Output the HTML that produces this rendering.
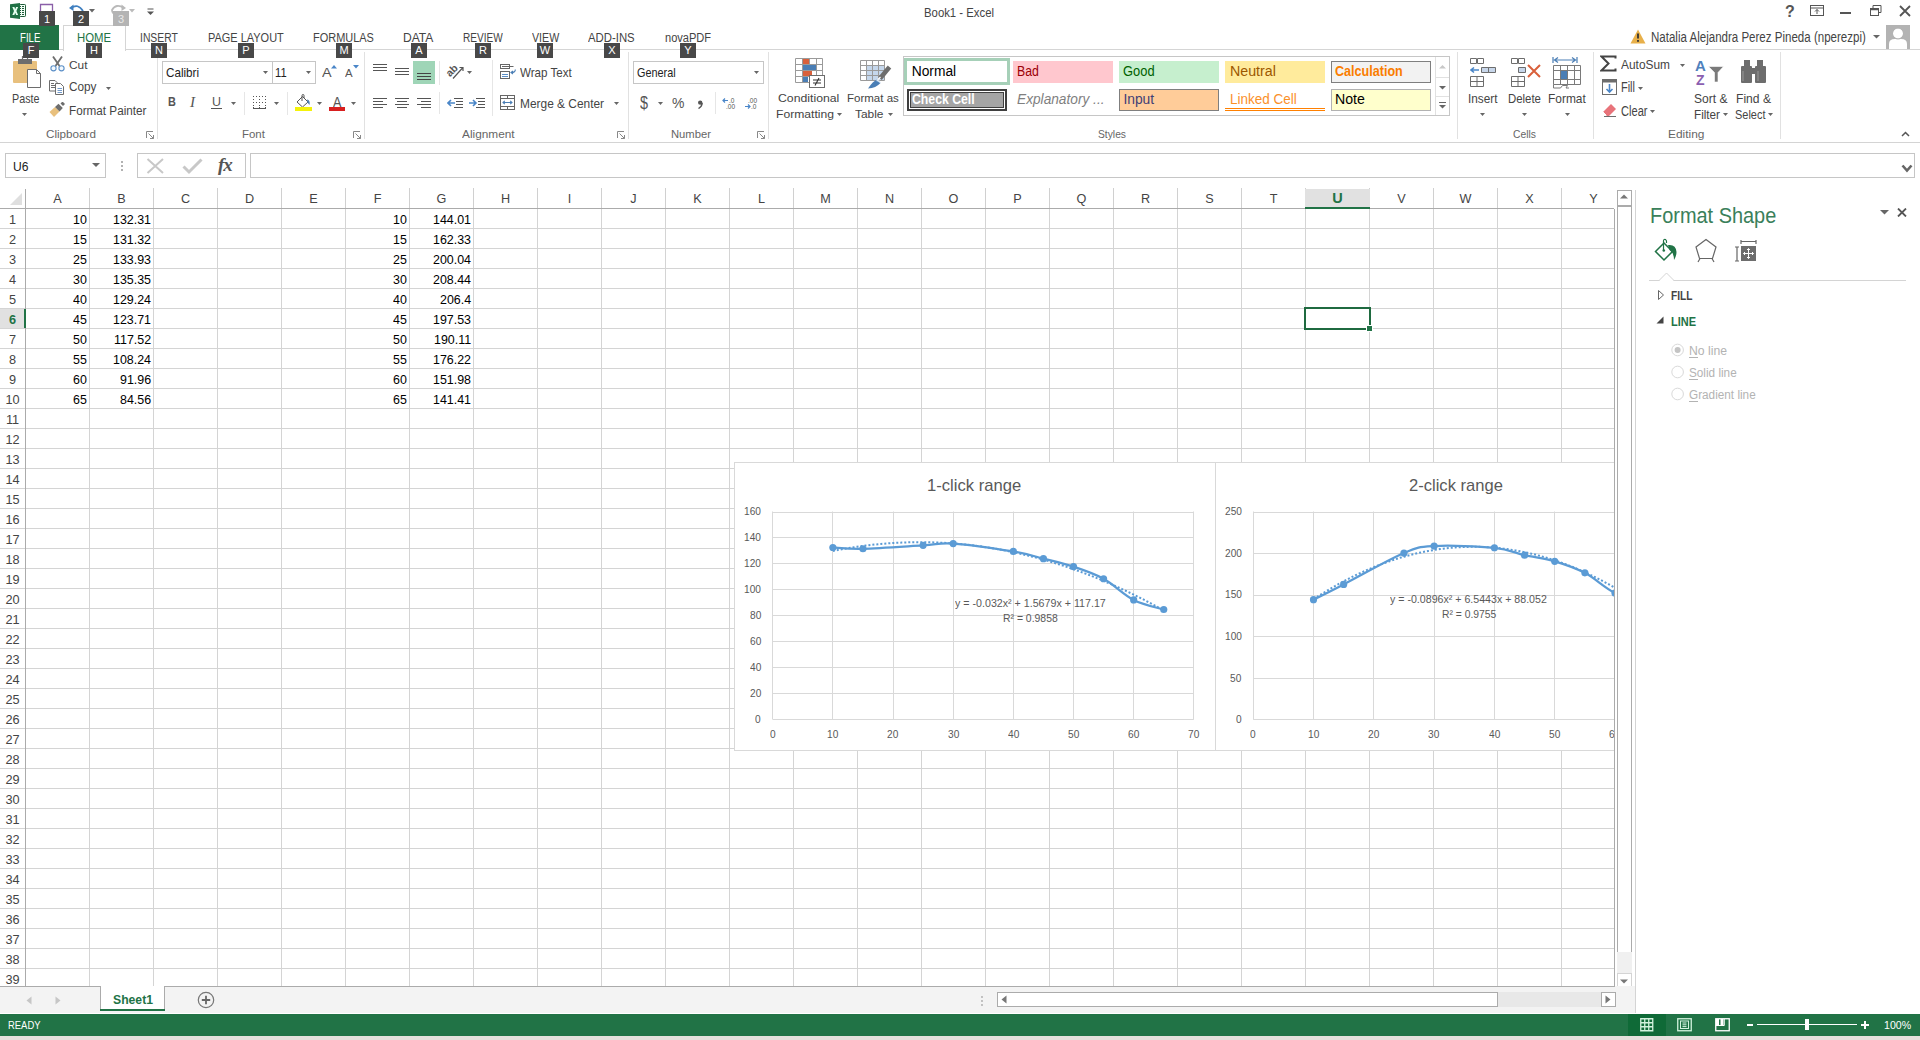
<!DOCTYPE html>
<html><head><meta charset="utf-8"><title>Book1 - Excel</title>
<style>
html,body{margin:0;padding:0;}
body{width:1920px;height:1040px;position:relative;overflow:hidden;background:#fff;font-family:"Liberation Sans",sans-serif;color:#444;}
.a{position:absolute;}
.t{position:absolute;white-space:nowrap;line-height:1;}
.kt{position:absolute;z-index:10;background:#484848;color:#fff;font-size:11px;line-height:15px;text-align:center;width:16px;height:15px;}

</style></head><body>
<!-- 01_title.py -->
<svg class="a" style="left:0px;top:0px" width="30" height="22">
  <rect x="19.5" y="4.5" width="6" height="12" rx="0.8" fill="#f4fff8" stroke="#1e5b38" stroke-width="1"/>
  <path d="M20 6.5h1M22 6.5h2M20 8.5h1M22 8.5h2M20 10.5h1M22 10.5h2M20 12.5h1M22 12.5h2M20 14.5h1M22 14.5h2" stroke="#1e5b38" stroke-width="1"/>
  <path d="M10 4.2 L20 3 V19 L10 17.8 Z" fill="#1f7145"/>
  <path d="M12.3 7 H14.4 L15.2 9.3 L16.1 7 H18.1 L16.4 11 L18.1 15 H16.1 L15.2 12.7 L14.4 15 H12.3 L14 11 Z" fill="#e6fff0"/>
</svg>
<svg class="a" style="left:39px;top:3px" width="16" height="10"><path d="M1.5 10V1.5h12V10" fill="none" stroke="#8a5fa8" stroke-width="1.3"/></svg>
<div class="kt" style="left:39px;top:11px;height:15px;line-height:16px;">1</div>
<svg class="a" style="left:68px;top:3px" width="20" height="10"><path d="M3 5 Q10 0 15 8" fill="none" stroke="#3f7fc0" stroke-width="1.8"/><path d="M1 5 L5.5 1.5 L5.5 8 Z" fill="#3f7fc0"/></svg>
<div class="kt" style="left:73px;top:11px;height:15px;line-height:16px;">2</div>
<svg class="a" style="left:89px;top:9px" width="6" height="4"><path d="M0 0h6L3 3.5z" fill="#666"/></svg>
<svg class="a" style="left:108px;top:3px" width="20" height="13"><path d="M16 5 Q8 0 4 7 Q4 11 9 12" fill="none" stroke="#b9b9b9" stroke-width="1.8"/><path d="M18 5 L13.5 1.5 L13.5 8 Z" fill="#b9b9b9"/></svg>
<div class="kt" style="left:113px;top:11px;height:15px;line-height:16px;background:#b4b4b4;color:#e8e8e8;">3</div>
<svg class="a" style="left:129px;top:9px" width="6" height="4"><path d="M0 0h6L3 3.5z" fill="#bbb"/></svg>
<svg class="a" style="left:147px;top:8px" width="7" height="8"><path d="M0.5 1h6" stroke="#555" stroke-width="1"/><path d="M0 3.5h7L3.5 7z" fill="#555"/></svg>
<svg class="a" style="left:1810px;top:5px" width="15" height="12"><rect x="0.5" y="0.5" width="13" height="10" fill="none" stroke="#555"/><path d="M0.5 3h13" stroke="#555"/><path d="M7 9V4.5M5 6.5l2-2 2 2" fill="none" stroke="#555"/></svg>
<div class="a" style="left:1840px;top:12px;width:11px;height:2px;background:#555;"></div>
<svg class="a" style="left:1870px;top:5px" width="12" height="12"><rect x="0.5" y="3.5" width="8" height="7" fill="none" stroke="#555"/><path d="M3 3.5V0.5h8v7H8.5" fill="none" stroke="#555"/><path d="M0.5 4.5h8" stroke="#555" stroke-width="1.5"/></svg>
<svg class="a" style="left:1899px;top:5px" width="12" height="12"><path d="M1 1L11 11M11 1L1 11" stroke="#555" stroke-width="1.8"/></svg>

<div class="t" style="left:924.00px;top:6.00px;font-size:13.08px;color:#444;transform:scaleX(0.8674);transform-origin:0 0;">Book1 - Excel</div>
<div class="t" style="left:1785.00px;top:4.00px;font-size:15.99px;color:#555;font-weight:bold;">?</div>
<div class="a" style="left:0;top:49px;width:1920px;height:1px;background:#d5d5d5;"></div>
<div class="a" style="left:0;top:25px;width:59px;height:25px;background:#217346;"></div>
<div class="a" style="left:63px;top:25px;width:61px;height:25px;background:#fff;border:1px solid #d5d5d5;border-bottom:none;"></div>
<div class="t" style="left:19.60px;top:32.00px;font-size:12.65px;color:#fff;transform:scaleX(0.7639);transform-origin:0 0;">FILE</div>
<div class="t" style="left:76.70px;top:32.00px;font-size:12.65px;color:#217346;transform:scaleX(0.8989);transform-origin:0 0;">HOME</div>
<div class="t" style="left:139.70px;top:32.00px;font-size:12.65px;color:#444;transform:scaleX(0.8192);transform-origin:0 0;">INSERT</div>
<div class="t" style="left:207.50px;top:32.00px;font-size:12.65px;color:#444;transform:scaleX(0.8676);transform-origin:0 0;">PAGE LAYOUT</div>
<div class="t" style="left:313.30px;top:32.00px;font-size:12.65px;color:#444;transform:scaleX(0.8668);transform-origin:0 0;">FORMULAS</div>
<div class="t" style="left:403.30px;top:32.00px;font-size:12.65px;color:#444;transform:scaleX(0.9545);transform-origin:0 0;">DATA</div>
<div class="t" style="left:463.30px;top:32.00px;font-size:12.65px;color:#444;transform:scaleX(0.7958);transform-origin:0 0;">REVIEW</div>
<div class="t" style="left:532.00px;top:32.00px;font-size:12.65px;color:#444;transform:scaleX(0.8417);transform-origin:0 0;">VIEW</div>
<div class="t" style="left:588.30px;top:32.00px;font-size:12.65px;color:#444;transform:scaleX(0.8983);transform-origin:0 0;">ADD-INS</div>
<div class="t" style="left:664.70px;top:32.00px;font-size:12.65px;color:#444;transform:scaleX(0.8746);transform-origin:0 0;">novaPDF</div>
<div class="kt" style="left:23px;top:43px;">F</div>
<div class="kt" style="left:86px;top:43px;">H</div>
<div class="kt" style="left:151px;top:43px;">N</div>
<div class="kt" style="left:238px;top:43px;">P</div>
<div class="kt" style="left:336px;top:43px;">M</div>
<div class="kt" style="left:411px;top:43px;">A</div>
<div class="kt" style="left:475px;top:43px;">R</div>
<div class="kt" style="left:537px;top:43px;">W</div>
<div class="kt" style="left:604px;top:43px;">X</div>
<div class="kt" style="left:680px;top:43px;">Y</div>
<svg class="a" style="left:1630px;top:29px" width="16" height="15"><path d="M8 0.5L15.5 14.5H0.5Z" fill="#e8b04a"/><path d="M8 4.5v5" stroke="#333" stroke-width="1.8"/><rect x="7.1" y="11" width="1.8" height="1.8" fill="#333"/></svg>
<svg class="a" style="left:1873px;top:35px" width="7" height="4"><path d="M0 0h7L3.5 3.5z" fill="#666"/></svg>
<div class="a" style="left:1886px;top:25px;width:24px;height:24px;background:#b3b3b3;overflow:hidden;">
<svg width="24" height="24"><circle cx="12" cy="8.5" r="5" fill="#fff"/><path d="M3 24 V19 Q3 14 9 14 H15 Q21 14 21 19 V24Z" fill="#fff"/><circle cx="12" cy="8.5" r="5.6" fill="none" stroke="#b3b3b3" stroke-width="0.8"/></svg></div>
<div class="t" style="left:1651.00px;top:31.00px;font-size:13.81px;color:#444;transform:scaleX(0.8361);transform-origin:0 0;">Natalia Alejandra Perez Pineda (nperezpi)</div>
<!-- 02_ribbon.py -->
<div class="a" style="left:0;top:142px;width:1920px;height:1px;background:#d4d4d4;"></div>
<svg class="a" style="left:12px;top:56px" width="32" height="34">
<rect x="1" y="5" width="24" height="22" rx="1" fill="#e8c07d"/>
<rect x="6" y="3" width="14" height="5" fill="#6d6d6d"/><rect x="10.5" y="0.5" width="5" height="4" fill="none" stroke="#6d6d6d" stroke-width="1.2"/>
<path d="M15.5 13.5h9l4 4v14h-13z" fill="#fff" stroke="#6d6d6d" stroke-width="1"/><path d="M24.5 13.5v4h4" fill="none" stroke="#6d6d6d"/>
</svg>
<div class="t" style="left:11.50px;top:94.00px;font-size:11.92px;color:#444;transform:scaleX(0.9023);transform-origin:0 0;">Paste</div>
<svg class="a" style="left:22.0px;top:113px" width="5" height="3"><path d="M0 0h5L2.5 3z" fill="#666"/></svg>
<svg class="a" style="left:49px;top:56px" width="17" height="16"><path d="M4 0.5L10.5 10M13 0.5L6.5 10" stroke="#6d6d6d" stroke-width="1.8"/><circle cx="4.5" cy="12.3" r="2.6" fill="#f4f9fd" stroke="#5b8fc7" stroke-width="1.1"/><circle cx="12.5" cy="12.3" r="2.6" fill="#f4f9fd" stroke="#5b8fc7" stroke-width="1.1"/></svg>
<div class="t" style="left:68.50px;top:60.00px;font-size:11.05px;color:#444;transform:scaleX(1.0762);transform-origin:0 0;">Cut</div>
<svg class="a" style="left:49px;top:80px" width="16" height="15"><path d="M0.5 0.5h5.5l2 2v8.5h-7.5z" fill="#fff" stroke="#6d6d6d"/><path d="M2 3.5h3M2 5.5h4M2 7.5h4" stroke="#6d6d6d"/><path d="M6.5 3.5h5l3 3v8h-8z" fill="#fff" stroke="#6d6d6d"/><path d="M8.5 8.5h4.5M8.5 10.5h4.5M8.5 12.5h4.5" stroke="#4f81bd" stroke-opacity="0.8"/></svg>
<div class="t" style="left:68.50px;top:82.00px;font-size:11.92px;color:#444;transform:scaleX(0.9884);transform-origin:0 0;">Copy</div>
<svg class="a" style="left:106.0px;top:86.5px" width="5" height="3"><path d="M0 0h5L2.5 3z" fill="#666"/></svg>
<svg class="a" style="left:49px;top:102px" width="18" height="16"><path d="M0.5 10 L6 5 L10.5 9.5 L5 15 Z" fill="#e8c07d"/><path d="M6 5 L9.5 1.8 L13.8 6 L10.5 9.5 Z" fill="#6d6d6d"/><path d="M11.5 1.5 L13.5 -0.5 L16 2 L14 4Z" fill="#6d6d6d"/></svg>
<div class="t" style="left:68.50px;top:105.00px;font-size:12.65px;color:#444;transform:scaleX(0.9267);transform-origin:0 0;">Format Painter</div>
<div class="t" style="left:45.50px;top:129.00px;font-size:10.76px;color:#666;transform:scaleX(1.0861);transform-origin:0 0;">Clipboard</div>
<svg class="a" style="left:146px;top:131px" width="8" height="8"><path d="M0.5 7V0.5H7" fill="none" stroke="#888"/><path d="M2.5 2.5L7.5 7.5M7.5 4v3.5H4" fill="none" stroke="#888"/></svg>
<div class="a" style="left:157px;top:52px;width:1px;height:87px;background:#e1e1e1;"></div>
<div class="a" style="left:162px;top:61px;width:109px;height:21px;border:1px solid #c6c6c6;background:#fff;"></div>
<div class="a" style="left:272px;top:61px;width:42px;height:21px;border:1px solid #c6c6c6;background:#fff;"></div>
<div class="t" style="left:165.60px;top:67.00px;font-size:12.35px;color:#222;transform:scaleX(0.9454);transform-origin:0 0;">Calibri</div>
<svg class="a" style="left:262.8px;top:71px" width="5" height="3"><path d="M0 0h5L2.5 3z" fill="#666"/></svg>
<div class="t" style="left:275.40px;top:67.00px;font-size:12.35px;color:#222;transform:scaleX(0.9045);transform-origin:0 0;">11</div>
<svg class="a" style="left:305.5px;top:71px" width="5" height="3"><path d="M0 0h5L2.5 3z" fill="#666"/></svg>
<div class="t" style="left:322.40px;top:66.00px;font-size:13.66px;color:#555;transform:scaleX(1.0534);transform-origin:0 0;">A</div>
<svg class="a" style="left:331px;top:65px" width="6" height="4"><path d="M0 3.5h6L3 0z" fill="#4a86c8"/></svg>
<div class="t" style="left:345.40px;top:69.00px;font-size:10.03px;color:#555;transform:scaleX(1.1361);transform-origin:0 0;">A</div>
<svg class="a" style="left:353px;top:65px" width="6" height="4"><path d="M0 0h6L3 3.5z" fill="#4a86c8"/></svg>
<div class="t" style="left:168.40px;top:96.00px;font-size:12.06px;color:#555;font-weight:bold;transform:scaleX(0.9068);transform-origin:0 0;">B</div>
<div class="t" style="left:190px;top:95px;font-family:'Liberation Serif',serif;font-style:italic;font-size:15px;color:#555;">I</div>
<div class="t" style="left:212.00px;top:96.00px;font-size:12.06px;color:#555;transform:scaleX(1.0330);transform-origin:0 0;">U</div>
<div class="a" style="left:211px;top:108px;width:11px;height:1px;background:#555;"></div>
<svg class="a" style="left:230.9px;top:102px" width="5" height="3"><path d="M0 0h5L2.5 3z" fill="#666"/></svg>
<div class="a" style="left:244px;top:92px;width:1px;height:23px;background:#e6e6e6;"></div>
<svg class="a" style="left:253px;top:96px" width="14" height="14"><g fill="#555"><rect x="0" y="0" width="1" height="1"/><rect x="3" y="0" width="1" height="1"/><rect x="6" y="0" width="1" height="1"/><rect x="9" y="0" width="1" height="1"/><rect x="12" y="0" width="1" height="1"/><rect x="0" y="3" width="1" height="1"/><rect x="6" y="3" width="1" height="1"/><rect x="12" y="3" width="1" height="1"/><rect x="0" y="6" width="1" height="1"/><rect x="3" y="6" width="1" height="1"/><rect x="6" y="6" width="1" height="1"/><rect x="9" y="6" width="1" height="1"/><rect x="12" y="6" width="1" height="1"/><rect x="0" y="9" width="1" height="1"/><rect x="6" y="9" width="1" height="1"/><rect x="12" y="9" width="1" height="1"/><rect x="0" y="11" width="1" height="1"/><rect x="6" y="11" width="1" height="1"/><rect x="12" y="11" width="1" height="1"/></g><path d="M0 12.5h13" stroke="#555" stroke-width="1"/></svg>
<svg class="a" style="left:274.0px;top:102px" width="5" height="3"><path d="M0 0h5L2.5 3z" fill="#666"/></svg>
<div class="a" style="left:287px;top:92px;width:1px;height:23px;background:#e6e6e6;"></div>
<svg class="a" style="left:294px;top:94px" width="18" height="18"><path d="M3 8 L8.5 2.5 L14 8 L8.5 13 Z" fill="#fff" stroke="#555" stroke-width="1"/><path d="M8 7V1.5Q8 0.5 9 0.5Q10 0.5 10 1.5V4" fill="none" stroke="#555" stroke-width="1"/><path d="M13 5.5 Q16.5 6 15.5 11 Q14 9 13.5 8.5Z" fill="#4a7eb5"/><rect x="1" y="13" width="17" height="4" fill="#f4f20a"/></svg>
<svg class="a" style="left:317.1px;top:102px" width="5" height="3"><path d="M0 0h5L2.5 3z" fill="#666"/></svg>
<div class="t" style="left:333.00px;top:95.00px;font-size:14.53px;color:#555;transform:scaleX(0.8664);transform-origin:0 0;">A</div>
<div class="a" style="left:329px;top:107px;width:16px;height:4px;background:#d81f1f;"></div>
<svg class="a" style="left:351.3px;top:102px" width="5" height="3"><path d="M0 0h5L2.5 3z" fill="#666"/></svg>
<div class="t" style="left:241.80px;top:129.00px;font-size:10.76px;color:#666;transform:scaleX(1.0640);transform-origin:0 0;">Font</div>
<svg class="a" style="left:353px;top:131px" width="8" height="8"><path d="M0.5 7V0.5H7" fill="none" stroke="#888"/><path d="M2.5 2.5L7.5 7.5M7.5 4v3.5H4" fill="none" stroke="#888"/></svg>
<div class="a" style="left:364px;top:52px;width:1px;height:87px;background:#e1e1e1;"></div>
<div class="a" style="left:373px;top:64px;width:14px;height:1px;background:#555;"></div>
<div class="a" style="left:373px;top:67px;width:14px;height:1px;background:#555;"></div>
<div class="a" style="left:373px;top:70px;width:14px;height:1px;background:#555;"></div>
<div class="a" style="left:395px;top:68px;width:14px;height:1px;background:#555;"></div>
<div class="a" style="left:395px;top:71px;width:14px;height:1px;background:#555;"></div>
<div class="a" style="left:395px;top:74px;width:14px;height:1px;background:#555;"></div>
<div class="a" style="left:413px;top:61px;width:22px;height:23px;background:#9fd5b7;"></div>
<div class="a" style="left:417px;top:73px;width:14px;height:1px;background:#444;"></div>
<div class="a" style="left:417px;top:76px;width:14px;height:1px;background:#444;"></div>
<div class="a" style="left:417px;top:79px;width:14px;height:1px;background:#444;"></div>
<div class="a" style="left:439px;top:61px;width:1px;height:24px;background:#e6e6e6;"></div>
<svg class="a" style="left:446px;top:63px" width="18" height="16"><text x="0" y="11" font-family="Liberation Sans" font-size="10.5" font-weight="bold" fill="#555" transform="rotate(-45 6 8)">ab</text><path d="M7 15.5 L16.5 5 M13.5 4.5h3.5v3.5" fill="none" stroke="#555" stroke-width="1.2"/></svg>
<svg class="a" style="left:467.0px;top:71px" width="5" height="3"><path d="M0 0h5L2.5 3z" fill="#666"/></svg>
<div class="a" style="left:492px;top:60px;width:1px;height:56px;background:#e6e6e6;"></div>
<svg class="a" style="left:499px;top:63px" width="18" height="17"><rect x="1.5" y="1.5" width="9" height="4" fill="#fff" stroke="#666"/><path d="M3 3.5h11.5" stroke="#666"/><rect x="1.5" y="8.5" width="9" height="7" fill="#fff" stroke="#666"/><path d="M3 11.5h6M3 13.5h6" stroke="#5b8fc7"/><path d="M16.3 6.5 Q16.5 9.5 12.5 9.5 M14 8 L12 9.5 L14 11" fill="none" stroke="#4a7eb5" stroke-width="1.1"/></svg>
<div class="t" style="left:519.70px;top:67.00px;font-size:12.79px;color:#444;transform:scaleX(0.9070);transform-origin:0 0;">Wrap Text</div>
<div class="a" style="left:373px;top:98px;width:14px;height:1px;background:#555;"></div>
<div class="a" style="left:373px;top:101px;width:10px;height:1px;background:#555;"></div>
<div class="a" style="left:373px;top:104px;width:14px;height:1px;background:#555;"></div>
<div class="a" style="left:373px;top:107px;width:10px;height:1px;background:#555;"></div>
<div class="a" style="left:395px;top:98px;width:14px;height:1px;background:#555;"></div>
<div class="a" style="left:397px;top:101px;width:10px;height:1px;background:#555;"></div>
<div class="a" style="left:395px;top:104px;width:14px;height:1px;background:#555;"></div>
<div class="a" style="left:397px;top:107px;width:10px;height:1px;background:#555;"></div>
<div class="a" style="left:417px;top:98px;width:14px;height:1px;background:#555;"></div>
<div class="a" style="left:421px;top:101px;width:10px;height:1px;background:#555;"></div>
<div class="a" style="left:417px;top:104px;width:14px;height:1px;background:#555;"></div>
<div class="a" style="left:421px;top:107px;width:10px;height:1px;background:#555;"></div>
<div class="a" style="left:439px;top:92px;width:1px;height:22px;background:#e6e6e6;"></div>
<svg class="a" style="left:447px;top:97px" width="17" height="12"><path d="M7 1.5h9M9 4.5h7M9 7.5h7M7 10.5h9" stroke="#555"/><path d="M1 6h7M4 3L1 6l3 3" fill="none" stroke="#4a86c8" stroke-width="1.6"/></svg>
<svg class="a" style="left:469px;top:97px" width="17" height="12"><path d="M7 1.5h9M9 4.5h7M9 7.5h7M7 10.5h9" stroke="#555"/><path d="M0 6h7M4 3l3 3-3 3" fill="none" stroke="#4a86c8" stroke-width="1.6"/></svg>
<svg class="a" style="left:500px;top:95px" width="16" height="16"><rect x="0.5" y="0.5" width="14" height="14" fill="#fff" stroke="#666"/><path d="M0.5 3.5h14M0.5 11.5h14M7.5 0.5v3M7.5 11.5v3" stroke="#666"/><path d="M3 7.5h9M4.8 5.8l-1.8 1.7 1.8 1.7M10.2 5.8l1.8 1.7-1.8 1.7" fill="none" stroke="#4a7eb5" stroke-width="1.1"/></svg>
<div class="t" style="left:519.70px;top:97.00px;font-size:13.66px;color:#444;transform:scaleX(0.8720);transform-origin:0 0;">Merge &amp; Center</div>
<svg class="a" style="left:614.2px;top:102px" width="5" height="3"><path d="M0 0h5L2.5 3z" fill="#666"/></svg>
<div class="t" style="left:462.00px;top:129.00px;font-size:10.76px;color:#666;transform:scaleX(1.0997);transform-origin:0 0;">Alignment</div>
<svg class="a" style="left:617px;top:131px" width="8" height="8"><path d="M0.5 7V0.5H7" fill="none" stroke="#888"/><path d="M2.5 2.5L7.5 7.5M7.5 4v3.5H4" fill="none" stroke="#888"/></svg>
<div class="a" style="left:628px;top:52px;width:1px;height:87px;background:#e1e1e1;"></div>
<div class="a" style="left:633px;top:61px;width:129px;height:21px;border:1px solid #c6c6c6;background:#fff;"></div>
<div class="t" style="left:636.70px;top:67.00px;font-size:12.79px;color:#222;transform:scaleX(0.8483);transform-origin:0 0;">General</div>
<svg class="a" style="left:753.5px;top:71px" width="5" height="3"><path d="M0 0h5L2.5 3z" fill="#666"/></svg>
<div class="t" style="left:640.30px;top:94.00px;font-size:18.90px;color:#555;transform:scaleX(0.7613);transform-origin:0 0;">$</div>
<svg class="a" style="left:657.5px;top:102px" width="5" height="3"><path d="M0 0h5L2.5 3z" fill="#666"/></svg>
<div class="t" style="left:672.40px;top:96.00px;font-size:14.97px;color:#555;transform:scaleX(0.9315);transform-origin:0 0;">%</div>
<svg class="a" style="left:697px;top:100px" width="6" height="9"><circle cx="3.2" cy="2.6" r="2.2" fill="#555"/><path d="M5.2 3 Q5 6.5 1.5 8.5" fill="none" stroke="#555" stroke-width="1.4"/></svg>
<div class="a" style="left:715px;top:92px;width:1px;height:22px;background:#e6e6e6;"></div>
<svg class="a" style="left:722px;top:97px" width="16" height="13"><path d="M1 3.5h5M3 1.5l-2 2 2 2" fill="none" stroke="#4a86c8" stroke-width="1.2"/><text x="7" y="6" font-family="Liberation Sans" font-size="6.5" fill="#555">.0</text><text x="4" y="12" font-family="Liberation Sans" font-size="6.5" fill="#555">.00</text></svg>
<svg class="a" style="left:744px;top:97px" width="16" height="13"><text x="4" y="6" font-family="Liberation Sans" font-size="6.5" fill="#555">.00</text><path d="M1 9.5h5M4 7.5l2 2-2 2" fill="none" stroke="#4a86c8" stroke-width="1.2"/><text x="7" y="12" font-family="Liberation Sans" font-size="6.5" fill="#555">.0</text></svg>
<div class="t" style="left:671.00px;top:129.00px;font-size:10.76px;color:#666;transform:scaleX(1.0456);transform-origin:0 0;">Number</div>
<svg class="a" style="left:757px;top:131px" width="8" height="8"><path d="M0.5 7V0.5H7" fill="none" stroke="#888"/><path d="M2.5 2.5L7.5 7.5M7.5 4v3.5H4" fill="none" stroke="#888"/></svg>
<div class="a" style="left:768px;top:52px;width:1px;height:87px;background:#e1e1e1;"></div>
<svg class="a" style="left:795px;top:58px" width="32" height="32">
<path d="M0.5 0.5h27v24h-27z M0.5 6.5h27 M0.5 12.5h27 M0.5 18.5h27 M7.5 0.5v24 M14.5 0.5v24 M21.5 0.5v24" fill="#fff" stroke="#9a9a9a"/>
<rect x="8" y="1" width="6" height="5" fill="#d9603b"/><rect x="8" y="7" width="13" height="5" fill="#4a7eb5"/><rect x="8" y="13" width="9" height="5" fill="#d9603b"/><rect x="8" y="19" width="5" height="5" fill="#4a7eb5"/>
<rect x="14.5" y="17.5" width="15" height="12" fill="#fff" stroke="#6d6d6d"/><path d="M18 22h8M18 25h8M24 20l-4 7.5" stroke="#333" stroke-width="1.1"/>
</svg>
<div class="t" style="left:778.40px;top:92.00px;font-size:11.63px;color:#444;transform:scaleX(1.0536);transform-origin:0 0;">Conditional</div>
<div class="t" style="left:775.50px;top:108.00px;font-size:11.63px;color:#444;transform:scaleX(1.0437);transform-origin:0 0;">Formatting</div>
<svg class="a" style="left:836.9px;top:113px" width="5" height="3"><path d="M0 0h5L2.5 3z" fill="#666"/></svg>
<svg class="a" style="left:860px;top:60px" width="32" height="30">
<rect x="7" y="6" width="18" height="14" fill="#c5d7ec"/>
<path d="M0.5 0.5h24v20h-24z M0.5 5.5h24 M0.5 10.5h24 M0.5 15.5h24 M6.5 0.5v20 M12.5 0.5v20 M18.5 0.5v20" fill="none" stroke="#9a9a9a"/>
<path d="M29.5 7 L20 18.5" stroke="#6d6d6d" stroke-width="4.5"/><path d="M20.5 17 L17.5 20" stroke="#fff" stroke-width="1.2"/>
<path d="M17 19.5 Q13 21 8 28.5 Q16 28 20.5 23 Z" fill="#4a7eb5"/><path d="M16.5 20.5 Q19 20 20 22.5" fill="none" stroke="#dce8f4" stroke-width="1.5"/>
</svg>
<div class="t" style="left:847.40px;top:92.00px;font-size:11.63px;color:#444;transform:scaleX(0.9897);transform-origin:0 0;">Format as</div>
<div class="t" style="left:855.40px;top:108.00px;font-size:11.63px;color:#444;transform:scaleX(1.0252);transform-origin:0 0;">Table</div>
<svg class="a" style="left:887.5px;top:113px" width="5" height="3"><path d="M0 0h5L2.5 3z" fill="#666"/></svg>
<!-- 03_ribbon2.py -->
<div class="a" style="left:903px;top:56px;width:545px;height:58px;background:#fff;border:1px solid #c6c6c6;"></div>
<div class="a" style="left:904px;top:58px;width:100px;height:21px;border:3px solid #a6d0b8;background:#fff;"></div>
<div class="t" style="left:911.70px;top:65.00px;font-size:13.81px;color:#000;">Normal</div>
<div class="a" style="left:1013px;top:61px;width:100px;height:22px;background:#ffc7ce;"></div>
<div class="t" style="left:1017.40px;top:65.00px;font-size:13.81px;color:#9c0006;transform:scaleX(0.8914);transform-origin:0 0;">Bad</div>
<div class="a" style="left:1119px;top:61px;width:100px;height:22px;background:#c6efce;"></div>
<div class="t" style="left:1123.40px;top:65.00px;font-size:13.81px;color:#006100;transform:scaleX(0.9355);transform-origin:0 0;">Good</div>
<div class="a" style="left:1225px;top:61px;width:100px;height:22px;background:#ffeb9c;"></div>
<div class="t" style="left:1229.60px;top:65.00px;font-size:13.81px;color:#9c5700;transform:scaleX(1.0312);transform-origin:0 0;">Neutral</div>
<div class="a" style="left:1331px;top:61px;width:98px;height:20px;background:#f2f2f2;border:1px solid #7f7f7f;"></div>
<div class="t" style="left:1335.30px;top:65.00px;font-size:13.81px;color:#fa7d00;font-weight:bold;transform:scaleX(0.9110);transform-origin:0 0;">Calculation</div>
<div class="a" style="left:907px;top:89px;width:96px;height:18px;border:2px solid #3f3f3f;background:#a5a5a5;box-shadow:inset 0 0 0 1px #fff, inset 0 0 0 2px #3f3f3f;"></div>
<div class="t" style="left:911.70px;top:93.00px;font-size:13.81px;color:#fff;font-weight:bold;transform:scaleX(0.8880);transform-origin:0 0;">Check Cell</div>
<div class="t" style="left:1017.40px;top:93.00px;font-size:13.81px;color:#7f7f7f;font-style:italic;transform:scaleX(0.9925);transform-origin:0 0;">Explanatory ...</div>
<div class="a" style="left:1119px;top:89px;width:98px;height:20px;background:#ffcc99;border:1px solid #7f7f7f;"></div>
<div class="t" style="left:1123.40px;top:93.00px;font-size:13.81px;color:#3f3f76;">Input</div>
<div class="t" style="left:1229.60px;top:93.00px;font-size:13.81px;color:#fa7d00;transform:scaleX(0.9779);transform-origin:0 0;opacity:0.85;">Linked Cell</div>
<div class="a" style="left:1225px;top:108px;width:100px;height:1px;background:#ff8001;"></div>
<div class="a" style="left:1225px;top:110px;width:100px;height:1px;background:#ff8001;"></div>
<div class="a" style="left:1331px;top:89px;width:98px;height:20px;background:#ffffcc;border:1px solid #b2b2b2;"></div>
<div class="t" style="left:1335.30px;top:93.00px;font-size:13.81px;color:#000;transform:scaleX(1.0251);transform-origin:0 0;">Note</div>
<div class="a" style="left:1435px;top:57px;width:1px;height:58px;background:#e1e1e1;"></div>
<div class="a" style="left:1436px;top:77px;width:13px;height:1px;background:#e1e1e1;"></div>
<div class="a" style="left:1436px;top:96px;width:13px;height:1px;background:#e1e1e1;"></div>
<svg class="a" style="left:1439px;top:65px" width="7" height="4"><path d="M0 3.5h7L3.5 0z" fill="#c8c8c8"/></svg>
<svg class="a" style="left:1439px;top:86px" width="7" height="4"><path d="M0 0h7L3.5 3.5z" fill="#666"/></svg>
<svg class="a" style="left:1439px;top:102px" width="7" height="8"><path d="M0 0.5h7" stroke="#666"/><path d="M0 3h7L3.5 6.5z" fill="#666"/></svg>
<div class="t" style="left:1098.30px;top:129.00px;font-size:10.76px;color:#666;transform:scaleX(0.9560);transform-origin:0 0;">Styles</div>
<div class="a" style="left:1457px;top:52px;width:1px;height:87px;background:#e1e1e1;"></div>
<svg class="a" style="left:1470px;top:58px" width="28" height="29">
<path d="M0.5 0.5h6v5h-6zM7.5 0.5h6v5h-6z" fill="#fff" stroke="#6d6d6d"/>
<path d="M11.5 9.5h7v5h-7zM18.5 9.5h7v5h-7z" fill="#c7d6ea" stroke="#6d6d6d"/>
<path d="M1 12h8M4 9.5L1 12l3 2.5" fill="none" stroke="#4a86c8" stroke-width="1.6"/>
<path d="M0.5 18.5h13v10h-13zM0.5 23.5h13M7 18.5v10" fill="#fff" stroke="#6d6d6d"/>
</svg>
<div class="t" style="left:1467.50px;top:92.00px;font-size:13.37px;color:#444;transform:scaleX(0.8821);transform-origin:0 0;">Insert</div>
<svg class="a" style="left:1480.0px;top:113px" width="5" height="3"><path d="M0 0h5L2.5 3z" fill="#666"/></svg>
<svg class="a" style="left:1511px;top:58px" width="31" height="29">
<path d="M0.5 0.5h6v5h-6zM7.5 0.5h6v5h-6z" fill="#fff" stroke="#6d6d6d"/>
<path d="M7.5 9.5h7v5h-7z" fill="#c7d6ea" stroke="#6d6d6d"/>
<path d="M0.5 18.5h13v10h-13zM0.5 23.5h13M7 18.5v10" fill="#fff" stroke="#6d6d6d"/>
<path d="M17 7L29 19M29 7L17 19" stroke="#d9603b" stroke-width="2"/>
</svg>
<div class="t" style="left:1508.00px;top:92.00px;font-size:13.37px;color:#444;transform:scaleX(0.8537);transform-origin:0 0;">Delete</div>
<svg class="a" style="left:1522.0px;top:113px" width="5" height="3"><path d="M0 0h5L2.5 3z" fill="#666"/></svg>
<svg class="a" style="left:1552px;top:56px" width="31" height="33">
<path d="M1 1v6M25 1v6M2.5 4h21M6 1.5L2.5 4L6 6.5M20 1.5L23.5 4L20 6.5" fill="none" stroke="#4a7eb5" stroke-width="1.2"/>
<path d="M1.5 9.5h27v19h-27z M1.5 14.5h27 M1.5 23.5h27 M8.5 9.5v19 M15.5 9.5v19 M22.5 9.5v19" fill="#fff" stroke="#7a7a7a"/>
<path d="M1.5 28.5v3.5h7l2-2.5h5l-1.5 2.5h3" fill="none" stroke="#7a7a7a"/>
<rect x="9" y="15" width="6" height="8" fill="#4a7eb5"/>
</svg>
<div class="t" style="left:1548.00px;top:92.00px;font-size:13.37px;color:#444;transform:scaleX(0.8926);transform-origin:0 0;">Format</div>
<svg class="a" style="left:1565.0px;top:113px" width="5" height="3"><path d="M0 0h5L2.5 3z" fill="#666"/></svg>
<div class="t" style="left:1513.00px;top:129.00px;font-size:10.76px;color:#666;transform:scaleX(0.9621);transform-origin:0 0;">Cells</div>
<div class="a" style="left:1593px;top:52px;width:1px;height:87px;background:#e1e1e1;"></div>
<svg class="a" style="left:1600px;top:55px" width="17" height="17"><path d="M15.5 3.5V1.5H1.5L8.5 8.5L1.5 15.5H15.5V13.5" fill="none" stroke="#444" stroke-width="2" stroke-linejoin="miter"/></svg>
<div class="t" style="left:1620.50px;top:58.00px;font-size:13.08px;color:#444;transform:scaleX(0.9106);transform-origin:0 0;">AutoSum</div>
<svg class="a" style="left:1679.5px;top:64px" width="5" height="3"><path d="M0 0h5L2.5 3z" fill="#666"/></svg>
<svg class="a" style="left:1602px;top:79px" width="15" height="16"><rect x="0.5" y="0.5" width="14" height="15" fill="#fff" stroke="#6d6d6d"/><rect x="0.5" y="0.5" width="14" height="3" fill="#6d6d6d"/><path d="M7.5 5v8M4.5 10l3 3 3-3" fill="none" stroke="#4a86c8" stroke-width="1.6"/></svg>
<div class="t" style="left:1620.50px;top:81.00px;font-size:13.81px;color:#444;transform:scaleX(0.7937);transform-origin:0 0;">Fill</div>
<svg class="a" style="left:1637.5px;top:87px" width="5" height="3"><path d="M0 0h5L2.5 3z" fill="#666"/></svg>
<svg class="a" style="left:1602px;top:102px" width="16" height="15"><path d="M1 10 L9 2 L14 7 L6 15 Z" fill="#e8737a"/><path d="M1 10 L4 13" stroke="#fff" stroke-width="1"/><path d="M2 14.5h12" stroke="#6d6d6d"/></svg>
<div class="t" style="left:1620.50px;top:105.00px;font-size:13.81px;color:#444;transform:scaleX(0.8031);transform-origin:0 0;">Clear</div>
<svg class="a" style="left:1650.0px;top:110px" width="5" height="3"><path d="M0 0h5L2.5 3z" fill="#666"/></svg>
<svg class="a" style="left:1695px;top:57px" width="32" height="29">
<text x="0" y="13.5" font-family="Liberation Sans" font-size="15" font-weight="bold" fill="#4f81bd">A</text>
<text x="1" y="28" font-family="Liberation Sans" font-size="14" font-weight="bold" fill="#8b5fb0">Z</text>
<path d="M13.5 9.5h15l-5.5 6v9.5h-3.5v-9.5z" fill="#7a7a7a" stroke="#fff" stroke-width="0.6"/>
</svg>
<div class="t" style="left:1694.00px;top:92.00px;font-size:13.37px;color:#444;transform:scaleX(0.9015);transform-origin:0 0;">Sort &amp;</div>
<div class="t" style="left:1694.00px;top:108.00px;font-size:13.08px;color:#444;transform:scaleX(0.8944);transform-origin:0 0;">Filter</div>
<svg class="a" style="left:1722.5px;top:113px" width="5" height="3"><path d="M0 0h5L2.5 3z" fill="#666"/></svg>
<svg class="a" style="left:1740px;top:59px" width="28" height="25">
<path d="M3 3h7v6h2V3h0 M16 3h7v6" fill="none"/>
<rect x="4" y="1" width="6" height="6" fill="#6d6d6d"/><rect x="17" y="1" width="6" height="6" fill="#6d6d6d"/>
<rect x="1" y="7" width="11" height="17" rx="1" fill="#6d6d6d"/><rect x="15" y="7" width="11" height="17" rx="1" fill="#6d6d6d"/>
<rect x="11" y="9" width="5" height="6" fill="#6d6d6d"/>
<path d="M3 12v10M18 12v10" stroke="#9a9a9a" stroke-width="1"/>
</svg>
<div class="t" style="left:1736.00px;top:92.00px;font-size:13.37px;color:#444;transform:scaleX(0.9056);transform-origin:0 0;">Find &amp;</div>
<div class="t" style="left:1734.50px;top:108.00px;font-size:13.08px;color:#444;transform:scaleX(0.8389);transform-origin:0 0;">Select</div>
<svg class="a" style="left:1768.0px;top:113px" width="5" height="3"><path d="M0 0h5L2.5 3z" fill="#666"/></svg>
<div class="t" style="left:1668.00px;top:129.00px;font-size:10.76px;color:#666;transform:scaleX(1.1098);transform-origin:0 0;">Editing</div>
<div class="a" style="left:1780px;top:52px;width:1px;height:87px;background:#e1e1e1;"></div>
<svg class="a" style="left:1901px;top:131px" width="9" height="6"><path d="M1 5l3.5-3.5L8 5" fill="none" stroke="#555" stroke-width="1.5"/></svg>
<!-- 04_grid.py -->
<div class="a" style="left:5px;top:153px;width:99px;height:23px;border:1px solid #c6c6c6;background:#fff;"></div>
<div class="t" style="left:12.50px;top:161.00px;font-size:12.06px;color:#222;transform:scaleX(1.0051);transform-origin:0 0;">U6</div>
<svg class="a" style="left:92px;top:163px" width="8" height="4"><path d="M0 0h8L4 4z" fill="#666"/></svg>
<svg class="a" style="left:120px;top:160px" width="4" height="12"><circle cx="2" cy="2" r="1" fill="#999"/><circle cx="2" cy="6" r="1" fill="#999"/><circle cx="2" cy="10" r="1" fill="#999"/></svg>
<div class="a" style="left:137px;top:153px;width:107px;height:23px;border:1px solid #c6c6c6;background:#fff;"></div>
<svg class="a" style="left:146px;top:158px" width="19" height="16"><path d="M1.5 1L17 15M17 1L1.5 15" stroke="#c8c8c8" stroke-width="2"/></svg>
<svg class="a" style="left:182px;top:158px" width="21" height="17"><path d="M1.5 8.5L7 14L19.5 1.5" fill="none" stroke="#c8c8c8" stroke-width="3"/></svg>
<div class="t" style="left:218px;top:155px;font-family:'Liberation Serif',serif;font-style:italic;font-weight:bold;font-size:19px;line-height:20px;color:#555;letter-spacing:-1px;">fx</div>
<div class="a" style="left:250px;top:153px;width:1663px;height:23px;border:1px solid #c6c6c6;background:#fff;"></div>
<svg class="a" style="left:1901px;top:164px" width="12" height="9"><path d="M1.5 1.5L6 6.5L10.5 1.5" fill="none" stroke="#666" stroke-width="2.6"/></svg>
<div class="a" style="left:26px;top:209px;width:1588px;height:777px;background-image:repeating-linear-gradient(to right, transparent 0 63px, #d4d4d4 63px 64px),repeating-linear-gradient(to bottom, transparent 0 19px, #d4d4d4 19px 20px);"></div>
<div class="a" style="left:26px;top:188px;width:1588px;height:20px;background-image:repeating-linear-gradient(to right, transparent 0 63px, #d0d0d0 63px 64px);"></div>
<div class="a" style="left:0px;top:208px;width:1614px;height:1px;background:#ababab;"></div>
<div class="a" style="left:25px;top:189px;width:1px;height:797px;background:#ababab;"></div>
<svg class="a" style="left:9px;top:192px" width="14" height="14"><path d="M13 1V13H1Z" fill="#dfdfdf"/></svg>
<div class="a" style="left:1305px;top:189px;width:65px;height:18px;background:#e1e1e1;"></div>
<div class="a" style="left:1305px;top:207px;width:65px;height:2px;background:#217346;"></div>
<div class="t" style="left:53.28px;top:193.00px;font-size:12.65px;color:#444;">A</div>
<div class="t" style="left:117.28px;top:193.00px;font-size:12.65px;color:#444;">B</div>
<div class="t" style="left:180.93px;top:193.00px;font-size:12.65px;color:#444;">C</div>
<div class="t" style="left:244.93px;top:193.00px;font-size:12.65px;color:#444;">D</div>
<div class="t" style="left:309.28px;top:193.00px;font-size:12.65px;color:#444;">E</div>
<div class="t" style="left:373.64px;top:193.00px;font-size:12.65px;color:#444;">F</div>
<div class="t" style="left:436.58px;top:193.00px;font-size:12.65px;color:#444;">G</div>
<div class="t" style="left:500.93px;top:193.00px;font-size:12.65px;color:#444;">H</div>
<div class="t" style="left:567.74px;top:193.00px;font-size:12.65px;color:#444;">I</div>
<div class="t" style="left:630.34px;top:193.00px;font-size:12.65px;color:#444;">J</div>
<div class="t" style="left:693.28px;top:193.00px;font-size:12.65px;color:#444;">K</div>
<div class="t" style="left:757.98px;top:193.00px;font-size:12.65px;color:#444;">L</div>
<div class="t" style="left:820.23px;top:193.00px;font-size:12.65px;color:#444;">M</div>
<div class="t" style="left:884.93px;top:193.00px;font-size:12.65px;color:#444;">N</div>
<div class="t" style="left:948.58px;top:193.00px;font-size:12.65px;color:#444;">O</div>
<div class="t" style="left:1013.28px;top:193.00px;font-size:12.65px;color:#444;">P</div>
<div class="t" style="left:1076.58px;top:193.00px;font-size:12.65px;color:#444;">Q</div>
<div class="t" style="left:1140.93px;top:193.00px;font-size:12.65px;color:#444;">R</div>
<div class="t" style="left:1205.28px;top:193.00px;font-size:12.65px;color:#444;">S</div>
<div class="t" style="left:1269.64px;top:193.00px;font-size:12.65px;color:#444;">T</div>
<div class="t" style="left:1332.25px;top:191.00px;font-size:14.53px;color:#217346;font-weight:bold;">U</div>
<div class="t" style="left:1397.28px;top:193.00px;font-size:12.65px;color:#444;">V</div>
<div class="t" style="left:1459.53px;top:193.00px;font-size:12.65px;color:#444;">W</div>
<div class="t" style="left:1525.28px;top:193.00px;font-size:12.65px;color:#444;">X</div>
<div class="t" style="left:1589.28px;top:193.00px;font-size:12.65px;color:#444;">Y</div>
<div class="a" style="left:0px;top:209px;width:25px;height:777px;background-image:repeating-linear-gradient(to bottom, transparent 0 19px, #d4d4d4 19px 20px);"></div>
<div class="t" style="left:8.96px;top:214.00px;font-size:12.72px;color:#444;">1</div>
<div class="t" style="left:8.96px;top:234.00px;font-size:12.72px;color:#444;">2</div>
<div class="t" style="left:8.96px;top:254.00px;font-size:12.72px;color:#444;">3</div>
<div class="t" style="left:8.96px;top:274.00px;font-size:12.72px;color:#444;">4</div>
<div class="t" style="left:8.96px;top:294.00px;font-size:12.72px;color:#444;">5</div>
<div class="a" style="left:0px;top:309px;width:25px;height:19px;background:#e1e1e1;"></div>
<div class="a" style="left:24px;top:309px;width:2px;height:19px;background:#217346;"></div>
<div class="t" style="left:8.96px;top:314.00px;font-size:12.72px;color:#217346;font-weight:bold;">6</div>
<div class="t" style="left:8.96px;top:334.00px;font-size:12.72px;color:#444;">7</div>
<div class="t" style="left:8.96px;top:354.00px;font-size:12.72px;color:#444;">8</div>
<div class="t" style="left:8.96px;top:374.00px;font-size:12.72px;color:#444;">9</div>
<div class="t" style="left:5.43px;top:394.00px;font-size:12.72px;color:#444;">10</div>
<div class="t" style="left:5.90px;top:414.00px;font-size:12.72px;color:#444;">11</div>
<div class="t" style="left:5.43px;top:434.00px;font-size:12.72px;color:#444;">12</div>
<div class="t" style="left:5.43px;top:454.00px;font-size:12.72px;color:#444;">13</div>
<div class="t" style="left:5.43px;top:474.00px;font-size:12.72px;color:#444;">14</div>
<div class="t" style="left:5.43px;top:494.00px;font-size:12.72px;color:#444;">15</div>
<div class="t" style="left:5.43px;top:514.00px;font-size:12.72px;color:#444;">16</div>
<div class="t" style="left:5.43px;top:534.00px;font-size:12.72px;color:#444;">17</div>
<div class="t" style="left:5.43px;top:554.00px;font-size:12.72px;color:#444;">18</div>
<div class="t" style="left:5.43px;top:574.00px;font-size:12.72px;color:#444;">19</div>
<div class="t" style="left:5.43px;top:594.00px;font-size:12.72px;color:#444;">20</div>
<div class="t" style="left:5.43px;top:614.00px;font-size:12.72px;color:#444;">21</div>
<div class="t" style="left:5.43px;top:634.00px;font-size:12.72px;color:#444;">22</div>
<div class="t" style="left:5.43px;top:654.00px;font-size:12.72px;color:#444;">23</div>
<div class="t" style="left:5.43px;top:674.00px;font-size:12.72px;color:#444;">24</div>
<div class="t" style="left:5.43px;top:694.00px;font-size:12.72px;color:#444;">25</div>
<div class="t" style="left:5.43px;top:714.00px;font-size:12.72px;color:#444;">26</div>
<div class="t" style="left:5.43px;top:734.00px;font-size:12.72px;color:#444;">27</div>
<div class="t" style="left:5.43px;top:754.00px;font-size:12.72px;color:#444;">28</div>
<div class="t" style="left:5.43px;top:774.00px;font-size:12.72px;color:#444;">29</div>
<div class="t" style="left:5.43px;top:794.00px;font-size:12.72px;color:#444;">30</div>
<div class="t" style="left:5.43px;top:814.00px;font-size:12.72px;color:#444;">31</div>
<div class="t" style="left:5.43px;top:834.00px;font-size:12.72px;color:#444;">32</div>
<div class="t" style="left:5.43px;top:854.00px;font-size:12.72px;color:#444;">33</div>
<div class="t" style="left:5.43px;top:874.00px;font-size:12.72px;color:#444;">34</div>
<div class="t" style="left:5.43px;top:894.00px;font-size:12.72px;color:#444;">35</div>
<div class="t" style="left:5.43px;top:914.00px;font-size:12.72px;color:#444;">36</div>
<div class="t" style="left:5.43px;top:934.00px;font-size:12.72px;color:#444;">37</div>
<div class="t" style="left:5.43px;top:954.00px;font-size:12.72px;color:#444;">38</div>
<div class="t" style="left:5.43px;top:974.00px;font-size:12.72px;color:#444;">39</div>
<div class="t" style="left:72.87px;top:214.00px;font-size:12.72px;color:#000;transform:scaleX(0.9775);transform-origin:0 0;">10</div>
<div class="t" style="left:112.68px;top:214.00px;font-size:12.72px;color:#000;transform:scaleX(0.9775);transform-origin:0 0;">132.31</div>
<div class="t" style="left:392.87px;top:214.00px;font-size:12.72px;color:#000;transform:scaleX(0.9775);transform-origin:0 0;">10</div>
<div class="t" style="left:432.68px;top:214.00px;font-size:12.72px;color:#000;transform:scaleX(0.9775);transform-origin:0 0;">144.01</div>
<div class="t" style="left:72.87px;top:234.00px;font-size:12.72px;color:#000;transform:scaleX(0.9775);transform-origin:0 0;">15</div>
<div class="t" style="left:112.68px;top:234.00px;font-size:12.72px;color:#000;transform:scaleX(0.9775);transform-origin:0 0;">131.32</div>
<div class="t" style="left:392.87px;top:234.00px;font-size:12.72px;color:#000;transform:scaleX(0.9775);transform-origin:0 0;">15</div>
<div class="t" style="left:432.68px;top:234.00px;font-size:12.72px;color:#000;transform:scaleX(0.9775);transform-origin:0 0;">162.33</div>
<div class="t" style="left:72.87px;top:254.00px;font-size:12.72px;color:#000;transform:scaleX(0.9775);transform-origin:0 0;">25</div>
<div class="t" style="left:112.68px;top:254.00px;font-size:12.72px;color:#000;transform:scaleX(0.9775);transform-origin:0 0;">133.93</div>
<div class="t" style="left:392.87px;top:254.00px;font-size:12.72px;color:#000;transform:scaleX(0.9775);transform-origin:0 0;">25</div>
<div class="t" style="left:432.68px;top:254.00px;font-size:12.72px;color:#000;transform:scaleX(0.9775);transform-origin:0 0;">200.04</div>
<div class="t" style="left:72.87px;top:274.00px;font-size:12.72px;color:#000;transform:scaleX(0.9775);transform-origin:0 0;">30</div>
<div class="t" style="left:112.68px;top:274.00px;font-size:12.72px;color:#000;transform:scaleX(0.9775);transform-origin:0 0;">135.35</div>
<div class="t" style="left:392.87px;top:274.00px;font-size:12.72px;color:#000;transform:scaleX(0.9775);transform-origin:0 0;">30</div>
<div class="t" style="left:432.68px;top:274.00px;font-size:12.72px;color:#000;transform:scaleX(0.9775);transform-origin:0 0;">208.44</div>
<div class="t" style="left:72.87px;top:294.00px;font-size:12.72px;color:#000;transform:scaleX(0.9775);transform-origin:0 0;">40</div>
<div class="t" style="left:112.68px;top:294.00px;font-size:12.72px;color:#000;transform:scaleX(0.9775);transform-origin:0 0;">129.24</div>
<div class="t" style="left:392.87px;top:294.00px;font-size:12.72px;color:#000;transform:scaleX(0.9775);transform-origin:0 0;">40</div>
<div class="t" style="left:439.59px;top:294.00px;font-size:12.72px;color:#000;transform:scaleX(0.9775);transform-origin:0 0;">206.4</div>
<div class="t" style="left:72.87px;top:314.00px;font-size:12.72px;color:#000;transform:scaleX(0.9775);transform-origin:0 0;">45</div>
<div class="t" style="left:112.68px;top:314.00px;font-size:12.72px;color:#000;transform:scaleX(0.9775);transform-origin:0 0;">123.71</div>
<div class="t" style="left:392.87px;top:314.00px;font-size:12.72px;color:#000;transform:scaleX(0.9775);transform-origin:0 0;">45</div>
<div class="t" style="left:432.68px;top:314.00px;font-size:12.72px;color:#000;transform:scaleX(0.9775);transform-origin:0 0;">197.53</div>
<div class="t" style="left:72.87px;top:334.00px;font-size:12.72px;color:#000;transform:scaleX(0.9775);transform-origin:0 0;">50</div>
<div class="t" style="left:113.60px;top:334.00px;font-size:12.72px;color:#000;transform:scaleX(0.9775);transform-origin:0 0;">117.52</div>
<div class="t" style="left:392.87px;top:334.00px;font-size:12.72px;color:#000;transform:scaleX(0.9775);transform-origin:0 0;">50</div>
<div class="t" style="left:433.60px;top:334.00px;font-size:12.72px;color:#000;transform:scaleX(0.9775);transform-origin:0 0;">190.11</div>
<div class="t" style="left:72.87px;top:354.00px;font-size:12.72px;color:#000;transform:scaleX(0.9775);transform-origin:0 0;">55</div>
<div class="t" style="left:112.68px;top:354.00px;font-size:12.72px;color:#000;transform:scaleX(0.9775);transform-origin:0 0;">108.24</div>
<div class="t" style="left:392.87px;top:354.00px;font-size:12.72px;color:#000;transform:scaleX(0.9775);transform-origin:0 0;">55</div>
<div class="t" style="left:432.68px;top:354.00px;font-size:12.72px;color:#000;transform:scaleX(0.9775);transform-origin:0 0;">176.22</div>
<div class="t" style="left:72.87px;top:374.00px;font-size:12.72px;color:#000;transform:scaleX(0.9775);transform-origin:0 0;">60</div>
<div class="t" style="left:119.59px;top:374.00px;font-size:12.72px;color:#000;transform:scaleX(0.9775);transform-origin:0 0;">91.96</div>
<div class="t" style="left:392.87px;top:374.00px;font-size:12.72px;color:#000;transform:scaleX(0.9775);transform-origin:0 0;">60</div>
<div class="t" style="left:432.68px;top:374.00px;font-size:12.72px;color:#000;transform:scaleX(0.9775);transform-origin:0 0;">151.98</div>
<div class="t" style="left:72.87px;top:394.00px;font-size:12.72px;color:#000;transform:scaleX(0.9775);transform-origin:0 0;">65</div>
<div class="t" style="left:119.59px;top:394.00px;font-size:12.72px;color:#000;transform:scaleX(0.9775);transform-origin:0 0;">84.56</div>
<div class="t" style="left:392.87px;top:394.00px;font-size:12.72px;color:#000;transform:scaleX(0.9775);transform-origin:0 0;">65</div>
<div class="t" style="left:432.68px;top:394.00px;font-size:12.72px;color:#000;transform:scaleX(0.9775);transform-origin:0 0;">141.41</div>
<div class="a" style="left:1304px;top:307px;width:63px;height:19px;border:2px solid #1f6a40;"></div>
<div class="a" style="left:1366px;top:325px;width:5px;height:5px;background:#217346;border:1px solid #fff;"></div>
<!-- 05_charts.py -->
<div class="a" style="left:734px;top:462px;width:482px;height:289px;overflow:hidden;">
<svg width="482" height="289" style="position:absolute;left:0;top:0"><rect x="0.5" y="0.5" width="481" height="288" fill="#fff" stroke="#d9d9d9"/><path d="M38.70 257.5H459.82 M38.70 231.5H459.82 M38.70 205.5H459.82 M38.70 179.5H459.82 M38.70 153.5H459.82 M38.70 127.5H459.82 M38.70 101.5H459.82 M38.70 75.5H459.82 M38.70 50.5H459.82 M38.5 49.50V257.40 M98.5 49.50V257.40 M159.5 49.50V257.40 M219.5 49.50V257.40 M279.5 49.50V257.40 M339.5 49.50V257.40 M399.5 49.50V257.40 M459.5 49.50V257.40" stroke="#d9d9d9" stroke-width="1" fill="none"/><path d="M98.86 88.94 L101.87 88.34 L104.88 87.77 L107.88 87.22 L110.89 86.69 L113.90 86.18 L116.91 85.69 L119.92 85.23 L122.92 84.78 L125.93 84.35 L128.94 83.95 L131.95 83.56 L134.96 83.20 L137.96 82.86 L140.97 82.53 L143.98 82.23 L146.99 81.95 L150.00 81.69 L153.00 81.45 L156.01 81.24 L159.02 81.04 L162.03 80.86 L165.04 80.71 L168.04 80.57 L171.05 80.46 L174.06 80.36 L177.07 80.29 L180.08 80.24 L183.08 80.21 L186.09 80.20 L189.10 80.21 L192.11 80.24 L195.12 80.29 L198.12 80.36 L201.13 80.46 L204.14 80.57 L207.15 80.71 L210.16 80.86 L213.16 81.04 L216.17 81.24 L219.18 81.46 L222.19 81.69 L225.20 81.95 L228.20 82.24 L231.21 82.54 L234.22 82.86 L237.23 83.20 L240.24 83.57 L243.24 83.95 L246.25 84.36 L249.26 84.78 L252.27 85.23 L255.28 85.70 L258.28 86.19 L261.29 86.70 L264.30 87.23 L267.31 87.78 L270.32 88.35 L273.32 88.94 L276.33 89.55 L279.34 90.19 L282.35 90.84 L285.36 91.52 L288.36 92.22 L291.37 92.93 L294.38 93.67 L297.39 94.43 L300.40 95.21 L303.40 96.01 L306.41 96.83 L309.42 97.67 L312.43 98.54 L315.44 99.42 L318.44 100.32 L321.45 101.25 L324.46 102.20 L327.47 103.16 L330.48 104.15 L333.48 105.16 L336.49 106.19 L339.50 107.24 L342.51 108.31 L345.52 109.40 L348.52 110.51 L351.53 111.65 L354.54 112.80 L357.55 113.97 L360.56 115.17 L363.56 116.39 L366.57 117.62 L369.58 118.88 L372.59 120.16 L375.60 121.46 L378.60 122.78 L381.61 124.12 L384.62 125.48 L387.63 126.86 L390.64 128.27 L393.64 129.69 L396.65 131.14 L399.66 132.60 L402.67 134.09 L405.68 135.60 L408.68 137.12 L411.69 138.67 L414.70 140.24 L417.71 141.83 L420.72 143.45 L423.72 145.08 L426.73 146.73 L429.74 148.40" stroke="#5b9bd5" stroke-width="2" stroke-dasharray="2 2" fill="none"/><path d="M98.86 85.48 C103.87 85.69 113.90 87.12 128.94 86.77 C143.98 86.42 174.06 84.25 189.10 83.37 C204.14 82.50 204.14 80.51 219.18 81.53 C234.22 82.55 264.30 86.95 279.34 89.47 C294.38 91.99 299.39 94.12 309.42 96.65 C319.45 99.19 329.47 101.35 339.50 104.70 C349.53 108.05 359.55 111.22 369.58 116.76 C379.61 122.29 389.63 132.78 399.66 137.91 C409.69 143.04 424.73 145.92 429.74 147.52" stroke="#5b9bd5" stroke-width="2.25" fill="none" stroke-linejoin="round"/><circle cx="98.86" cy="85.48" r="3.6" fill="#5b9bd5"/><circle cx="128.94" cy="86.77" r="3.6" fill="#5b9bd5"/><circle cx="189.10" cy="83.37" r="3.6" fill="#5b9bd5"/><circle cx="219.18" cy="81.53" r="3.6" fill="#5b9bd5"/><circle cx="279.34" cy="89.47" r="3.6" fill="#5b9bd5"/><circle cx="309.42" cy="96.65" r="3.6" fill="#5b9bd5"/><circle cx="339.50" cy="104.70" r="3.6" fill="#5b9bd5"/><circle cx="369.58" cy="116.76" r="3.6" fill="#5b9bd5"/><circle cx="399.66" cy="137.91" r="3.6" fill="#5b9bd5"/><circle cx="429.74" cy="147.52" r="3.6" fill="#5b9bd5"/></svg>
</div>
<div class="a" style="left:1215px;top:462px;width:399px;height:289px;overflow:hidden;">
<svg width="482" height="289" style="position:absolute;left:0;top:0"><rect x="0.5" y="0.5" width="481" height="288" fill="#fff" stroke="#d9d9d9"/><path d="M38.20 257.5H460.30 M38.20 216.5H460.30 M38.20 174.5H460.30 M38.20 133.5H460.30 M38.20 91.5H460.30 M38.20 50.5H460.30 M38.5 49.50V257.40 M98.5 49.50V257.40 M158.5 49.50V257.40 M219.5 49.50V257.40 M279.5 49.50V257.40 M339.5 49.50V257.40 M400.5 49.50V257.40 M460.5 49.50V257.40" stroke="#d9d9d9" stroke-width="1" fill="none"/><path d="M98.50 137.20 L101.52 135.25 L104.53 133.33 L107.55 131.44 L110.56 129.60 L113.58 127.79 L116.59 126.02 L119.61 124.29 L122.62 122.59 L125.63 120.93 L128.65 119.31 L131.66 117.72 L134.68 116.18 L137.70 114.66 L140.71 113.19 L143.73 111.76 L146.74 110.36 L149.76 109.00 L152.77 107.67 L155.79 106.39 L158.80 105.14 L161.82 103.92 L164.83 102.75 L167.85 101.61 L170.86 100.51 L173.88 99.45 L176.89 98.42 L179.90 97.43 L182.92 96.48 L185.93 95.57 L188.95 94.69 L191.97 93.85 L194.98 93.05 L198.00 92.28 L201.01 91.55 L204.03 90.86 L207.04 90.21 L210.06 89.59 L213.07 89.02 L216.09 88.47 L219.10 87.97 L222.12 87.50 L225.13 87.07 L228.14 86.68 L231.16 86.32 L234.17 86.01 L237.19 85.72 L240.20 85.48 L243.22 85.27 L246.24 85.11 L249.25 84.97 L252.27 84.88 L255.28 84.82 L258.30 84.80 L261.31 84.82 L264.33 84.87 L267.34 84.97 L270.36 85.09 L273.37 85.26 L276.38 85.46 L279.40 85.70 L282.41 85.98 L285.43 86.30 L288.45 86.65 L291.46 87.04 L294.48 87.47 L297.49 87.93 L300.51 88.43 L303.52 88.97 L306.54 89.55 L309.55 90.16 L312.57 90.81 L315.58 91.50 L318.60 92.22 L321.61 92.99 L324.62 93.79 L327.64 94.62 L330.65 95.50 L333.67 96.41 L336.68 97.36 L339.70 98.34 L342.72 99.37 L345.73 100.43 L348.75 101.52 L351.76 102.66 L354.78 103.83 L357.79 105.04 L360.81 106.29 L363.82 107.57 L366.84 108.89 L369.85 110.25 L372.87 111.65 L375.88 113.08 L378.89 114.55 L381.91 116.06 L384.93 117.60 L387.94 119.18 L390.95 120.80 L393.97 122.46 L396.99 124.15 L400.00 125.88 L403.02 127.65 L406.03 129.46 L409.05 131.30 L412.06 133.18 L415.08 135.10 L418.09 137.05 L421.11 139.04 L424.12 141.07 L427.13 143.14 L430.15 145.24" stroke="#5b9bd5" stroke-width="2" stroke-dasharray="2 2" fill="none"/><path d="M98.50 137.64 C103.53 135.10 113.58 130.17 128.65 122.41 C143.73 114.64 173.88 97.44 188.95 91.05 C204.03 84.66 204.03 84.94 219.10 84.06 C234.18 83.18 264.33 84.25 279.40 85.76 C294.48 87.27 299.50 90.88 309.55 93.13 C319.60 95.39 329.65 96.35 339.70 99.30 C349.75 102.26 359.80 105.57 369.85 110.86 C379.90 116.14 389.95 126.19 400.00 131.01 C410.05 135.84 425.13 138.34 430.15 139.80" stroke="#5b9bd5" stroke-width="2.25" fill="none" stroke-linejoin="round"/><circle cx="98.50" cy="137.64" r="3.6" fill="#5b9bd5"/><circle cx="128.65" cy="122.41" r="3.6" fill="#5b9bd5"/><circle cx="188.95" cy="91.05" r="3.6" fill="#5b9bd5"/><circle cx="219.10" cy="84.06" r="3.6" fill="#5b9bd5"/><circle cx="279.40" cy="85.76" r="3.6" fill="#5b9bd5"/><circle cx="309.55" cy="93.13" r="3.6" fill="#5b9bd5"/><circle cx="339.70" cy="99.30" r="3.6" fill="#5b9bd5"/><circle cx="369.85" cy="110.86" r="3.6" fill="#5b9bd5"/><circle cx="400.00" cy="131.01" r="3.6" fill="#5b9bd5"/><circle cx="430.15" cy="139.80" r="3.6" fill="#5b9bd5"/></svg>
</div>
<div class="t" style="left:927.40px;top:477.00px;font-size:17.15px;color:#595959;transform:scaleX(0.9699);transform-origin:0 0;">1-click range</div>
<div class="t" style="left:755.36px;top:714.00px;font-size:10.90px;color:#595959;transform:scaleX(0.9299);transform-origin:0 0;">0</div>
<div class="t" style="left:749.72px;top:688.00px;font-size:10.90px;color:#595959;transform:scaleX(0.9299);transform-origin:0 0;">20</div>
<div class="t" style="left:749.72px;top:662.00px;font-size:10.90px;color:#595959;transform:scaleX(0.9299);transform-origin:0 0;">40</div>
<div class="t" style="left:749.72px;top:636.00px;font-size:10.90px;color:#595959;transform:scaleX(0.9299);transform-origin:0 0;">60</div>
<div class="t" style="left:749.72px;top:610.00px;font-size:10.90px;color:#595959;transform:scaleX(0.9299);transform-origin:0 0;">80</div>
<div class="t" style="left:744.09px;top:584.00px;font-size:10.90px;color:#595959;transform:scaleX(0.9299);transform-origin:0 0;">100</div>
<div class="t" style="left:744.09px;top:558.00px;font-size:10.90px;color:#595959;transform:scaleX(0.9299);transform-origin:0 0;">120</div>
<div class="t" style="left:744.09px;top:532.00px;font-size:10.90px;color:#595959;transform:scaleX(0.9299);transform-origin:0 0;">140</div>
<div class="t" style="left:744.09px;top:506.00px;font-size:10.90px;color:#595959;transform:scaleX(0.9299);transform-origin:0 0;">160</div>
<div class="t" style="left:769.88px;top:729.00px;font-size:10.76px;color:#595959;transform:scaleX(0.9425);transform-origin:0 0;">0</div>
<div class="t" style="left:827.22px;top:729.00px;font-size:10.76px;color:#595959;transform:scaleX(0.9425);transform-origin:0 0;">10</div>
<div class="t" style="left:887.38px;top:729.00px;font-size:10.76px;color:#595959;transform:scaleX(0.9425);transform-origin:0 0;">20</div>
<div class="t" style="left:947.54px;top:729.00px;font-size:10.76px;color:#595959;transform:scaleX(0.9425);transform-origin:0 0;">30</div>
<div class="t" style="left:1007.70px;top:729.00px;font-size:10.76px;color:#595959;transform:scaleX(0.9425);transform-origin:0 0;">40</div>
<div class="t" style="left:1067.86px;top:729.00px;font-size:10.76px;color:#595959;transform:scaleX(0.9425);transform-origin:0 0;">50</div>
<div class="t" style="left:1128.02px;top:729.00px;font-size:10.76px;color:#595959;transform:scaleX(0.9425);transform-origin:0 0;">60</div>
<div class="t" style="left:1188.18px;top:729.00px;font-size:10.76px;color:#595959;transform:scaleX(0.9425);transform-origin:0 0;">70</div>
<div class="t" style="left:954.70px;top:598.00px;font-size:10.90px;color:#595959;transform:scaleX(0.9796);transform-origin:0 0;">y = -0.032x² + 1.5679x + 117.17</div>
<div class="t" style="left:1003.00px;top:613.00px;font-size:10.90px;color:#595959;transform:scaleX(0.9569);transform-origin:0 0;">R² = 0.9858</div>
<div class="a" style="left:1215px;top:462px;width:399px;height:289px;overflow:hidden;">
<div class="t" style="left:193.70px;top:15.00px;font-size:17.15px;color:#595959;transform:scaleX(0.9658);transform-origin:0 0;">2-click range</div>
<div class="t" style="left:21.06px;top:252.00px;font-size:10.90px;color:#595959;transform:scaleX(0.9299);transform-origin:0 0;">0</div>
<div class="t" style="left:15.42px;top:211.00px;font-size:10.90px;color:#595959;transform:scaleX(0.9299);transform-origin:0 0;">50</div>
<div class="t" style="left:9.79px;top:169.00px;font-size:10.90px;color:#595959;transform:scaleX(0.9299);transform-origin:0 0;">100</div>
<div class="t" style="left:9.79px;top:127.00px;font-size:10.90px;color:#595959;transform:scaleX(0.9299);transform-origin:0 0;">150</div>
<div class="t" style="left:9.79px;top:86.00px;font-size:10.90px;color:#595959;transform:scaleX(0.9299);transform-origin:0 0;">200</div>
<div class="t" style="left:9.79px;top:44.00px;font-size:10.90px;color:#595959;transform:scaleX(0.9299);transform-origin:0 0;">250</div>
<div class="t" style="left:35.38px;top:267.00px;font-size:10.76px;color:#595959;transform:scaleX(0.9425);transform-origin:0 0;">0</div>
<div class="t" style="left:92.86px;top:267.00px;font-size:10.76px;color:#595959;transform:scaleX(0.9425);transform-origin:0 0;">10</div>
<div class="t" style="left:153.16px;top:267.00px;font-size:10.76px;color:#595959;transform:scaleX(0.9425);transform-origin:0 0;">20</div>
<div class="t" style="left:213.46px;top:267.00px;font-size:10.76px;color:#595959;transform:scaleX(0.9425);transform-origin:0 0;">30</div>
<div class="t" style="left:273.76px;top:267.00px;font-size:10.76px;color:#595959;transform:scaleX(0.9425);transform-origin:0 0;">40</div>
<div class="t" style="left:334.06px;top:267.00px;font-size:10.76px;color:#595959;transform:scaleX(0.9425);transform-origin:0 0;">50</div>
<div class="t" style="left:394.36px;top:267.00px;font-size:10.76px;color:#595959;transform:scaleX(0.9425);transform-origin:0 0;">60</div>
<div class="t" style="left:454.66px;top:267.00px;font-size:10.76px;color:#595959;transform:scaleX(0.9425);transform-origin:0 0;">70</div>
<div class="t" style="left:175.30px;top:132.00px;font-size:10.90px;color:#595959;transform:scaleX(0.9757);transform-origin:0 0;">y = -0.0896x² + 6.5443x + 88.052</div>
<div class="t" style="left:226.90px;top:147.00px;font-size:10.90px;color:#595959;transform:scaleX(0.9482);transform-origin:0 0;">R² = 0.9755</div>
</div>
<!-- 06_bottom.py -->
<div class="a" style="left:1617px;top:190px;width:13px;height:14px;border:1px solid #ababab;border-bottom:none;background:#fff;"></div>
<svg class="a" style="left:1620px;top:194px" width="8" height="5"><path d="M0 4.5h8L4 0.5z" fill="#777"/></svg>
<div class="a" style="left:1617px;top:205px;width:13px;height:745px;border:1px solid #ababab;border-top:2px solid #ababab;background:#fff;"></div>
<div class="a" style="left:1617px;top:952px;width:15px;height:21px;background:#f0f0f0;"></div>
<div class="a" style="left:1617px;top:973px;width:13px;height:13px;border:1px solid #d4d4d4;background:#fff;"></div>
<svg class="a" style="left:1620px;top:979px" width="8" height="5"><path d="M0 0.5h8L4 4.5z" fill="#777"/></svg>
<div class="a" style="left:1635px;top:190px;width:1px;height:823px;background:#d4d4d4;"></div>
<div class="a" style="left:0px;top:986px;width:1635px;height:27px;background:#f3f3f3;"></div>
<div class="a" style="left:0px;top:986px;width:1615px;height:1px;background:#ababab;"></div>
<div class="a" style="left:1614px;top:209px;width:1px;height:778px;background:#ababab;"></div>
<svg class="a" style="left:26px;top:996px" width="6" height="9"><path d="M5.5 0.5v8L0.5 4.5z" fill="#c6c6c6"/></svg>
<svg class="a" style="left:55px;top:996px" width="6" height="9"><path d="M0.5 0.5v8L5.5 4.5z" fill="#c6c6c6"/></svg>
<div class="a" style="left:100px;top:986px;width:63px;height:25px;background:#fff;border-left:1px solid #ababab;border-right:1px solid #ababab;"></div>
<div class="a" style="left:100px;top:1009px;width:65px;height:2px;background:#217346;"></div>
<div class="t" style="left:112.50px;top:993.00px;font-size:13.59px;color:#217346;font-weight:bold;transform:scaleX(0.8975);transform-origin:0 0;">Sheet1</div>
<svg class="a" style="left:197px;top:991px" width="18" height="18"><circle cx="9" cy="9" r="7.7" fill="none" stroke="#777" stroke-width="1.2"/><path d="M9 4.8v8.4M4.8 9h8.4" stroke="#666" stroke-width="1.8"/></svg>
<svg class="a" style="left:980px;top:995px" width="4" height="12"><circle cx="2" cy="2" r="0.9" fill="#aaa"/><circle cx="2" cy="6" r="0.9" fill="#aaa"/><circle cx="2" cy="10" r="0.9" fill="#aaa"/></svg>
<div class="a" style="left:997px;top:992px;width:619px;height:15px;background:#e8e8e8;"></div>
<div class="a" style="left:997px;top:992px;width:13px;height:13px;border:1px solid #ababab;background:#fff;"></div>
<svg class="a" style="left:1001px;top:995px" width="6" height="9"><path d="M5.5 0.5v8L0.5 4.5z" fill="#777"/></svg>
<div class="a" style="left:1011px;top:992px;width:486px;height:13px;border:1px solid #ababab;border-left:none;background:#fff;"></div>
<div class="a" style="left:1601px;top:992px;width:13px;height:13px;border:1px solid #ababab;background:#fff;"></div>
<svg class="a" style="left:1605px;top:995px" width="6" height="9"><path d="M0.5 0.5v8L5.5 4.5z" fill="#777"/></svg>
<div class="a" style="left:0px;top:1014px;width:1920px;height:22px;background:#217346;"></div>
<div class="a" style="left:0px;top:1036px;width:1920px;height:4px;background:#e4e1dc;"></div>
<div class="t" style="left:7.50px;top:1020.00px;font-size:11.34px;color:#fff;transform:scaleX(0.8320);transform-origin:0 0;">READY</div>
<div class="a" style="left:1628px;top:1014px;width:38px;height:22px;background:#0f6a37;"></div>
<svg class="a" style="left:1640px;top:1018px" width="14" height="14"><path d="M0.75 0.75h12v12h-12zM0.75 4.75h12M0.75 8.75h12M4.75 0.75v12M8.75 0.75v12" fill="none" stroke="#d2f2dd" stroke-width="1.3"/></svg>
<svg class="a" style="left:1677px;top:1018px" width="16" height="14"><rect x="0.75" y="0.75" width="13.5" height="12" fill="none" stroke="#d2f2dd" stroke-width="1.3"/><rect x="3.5" y="3" width="8" height="7.5" fill="none" stroke="#d2f2dd" stroke-width="1"/><path d="M5.5 5h4M5.5 6.8h4M5.5 8.6h4" stroke="#d2f2dd" stroke-width="1"/></svg>
<svg class="a" style="left:1715px;top:1018px" width="16" height="14"><rect x="0.75" y="0.75" width="13.5" height="12" fill="none" stroke="#fff" stroke-width="1.3"/><rect x="1" y="1" width="3" height="6.5" fill="#fff"/><rect x="5.5" y="1" width="3" height="6.5" fill="#fff"/><path d="M0.75 7.5h8.5V1" fill="none" stroke="#fff" stroke-width="1"/></svg>
<div class="a" style="left:1747px;top:1024px;width:6px;height:2px;background:#fff;"></div>
<div class="a" style="left:1757px;top:1024px;width:100px;height:1px;background:#fff;"></div>
<div class="a" style="left:1805px;top:1019px;width:4px;height:11px;background:#fff;"></div>
<svg class="a" style="left:1861px;top:1021px" width="8" height="8"><path d="M4 0v8M0 4h8" stroke="#fff" stroke-width="2"/></svg>
<div class="t" style="left:1883.80px;top:1020.00px;font-size:10.90px;color:#fff;transform:scaleX(0.9720);transform-origin:0 0;">100%</div>
<!-- 07_panel.py -->
<div class="t" style="left:1649.70px;top:206.00px;font-size:21.51px;color:#3a805a;transform:scaleX(0.9266);transform-origin:0 0;">Format Shape</div>
<svg class="a" style="left:1880px;top:210px" width="9" height="5"><path d="M0 0h9L4.5 4.5z" fill="#666"/></svg>
<svg class="a" style="left:1897px;top:208px" width="10" height="9"><path d="M1 0.5L9 8.5M9 0.5L1 8.5" stroke="#555" stroke-width="1.8"/></svg>
<svg class="a" style="left:1654px;top:238px" width="25" height="24">
<path d="M1.5 13.5 L10 5 L18.5 13.5 L10 22 Z" fill="#fff" stroke="#217346" stroke-width="1.5"/>
<path d="M9.5 12 V3 Q9.5 1 11.5 1.5 Q13 2.5 12.5 5" fill="none" stroke="#217346" stroke-width="1.2"/>
<circle cx="9.8" cy="12.5" r="1.3" fill="#217346"/>
<path d="M14 7 Q22 6 22.5 14 Q22.5 18 20 22 Q20 15 15.5 12 Z" fill="#217346"/>
</svg>
<svg class="a" style="left:1695px;top:238px" width="23" height="25">
<path d="M11 1.5 L21 9 L17.5 20.5 H4.5 L1 9 Z" fill="none" stroke="#666" stroke-width="1.2"/>
<path d="M3 24L5 20.5M19 24L17 20.5" stroke="#666" stroke-width="1.2"/>
</svg>
<svg class="a" style="left:1734px;top:239px" width="24" height="23">
<path d="M7 1v4M22 1v4M7 2.5h15" stroke="#666" stroke-width="1.2"/>
<path d="M1 8h4M1 22h4M3 8v14" stroke="#666" stroke-width="1.2"/>
<rect x="7" y="7" width="15" height="15" fill="#6d6d6d"/>
<path d="M14.5 9.5v10M9.5 14.5h10M13 11l1.5-1.5L16 11M13 18l1.5 1.5L16 18M11 13l-1.5 1.5L11 16M18 13l1.5 1.5L18 16" fill="none" stroke="#fff" stroke-width="1"/>
</svg>
<div class="a" style="left:1649px;top:280px;width:257px;height:1px;background:#d4d4d4;"></div>
<svg class="a" style="left:1659px;top:272px" width="15" height="9"><path d="M0 8.5 L7.5 1 L15 8.5" fill="#fff" stroke="#d4d4d4" stroke-width="1"/><rect x="1" y="8" width="13" height="1" fill="#fff"/></svg>
<svg class="a" style="left:1658px;top:290px" width="6" height="10"><path d="M0.5 0.5L5.5 5L0.5 9.5Z" fill="none" stroke="#666" stroke-width="1"/></svg>
<div class="t" style="left:1671.30px;top:289.00px;font-size:13.08px;color:#444;font-weight:bold;transform:scaleX(0.7752);transform-origin:0 0;">FILL</div>
<svg class="a" style="left:1656px;top:316px" width="8" height="8"><path d="M7.5 0.5V7.5H0.5Z" fill="#444"/></svg>
<div class="t" style="left:1671.30px;top:316.00px;font-size:12.94px;color:#217346;font-weight:bold;transform:scaleX(0.8484);transform-origin:0 0;">LINE</div>
<svg class="a" style="left:1671px;top:343px" width="14" height="14"><circle cx="6.6" cy="7" r="5.8" fill="#fff" stroke="#d9d9d9" stroke-width="1"/><circle cx="6.6" cy="7" r="3" fill="#c4c4c4"/></svg>
<div class="t" style="left:1689.30px;top:344.00px;font-size:13.08px;color:#b3b3b3;transform:scaleX(0.9332);transform-origin:0 0;">No line</div>
<div class="a" style="left:1689px;top:357px;width:9px;height:1px;background:#b3b3b3;"></div>
<svg class="a" style="left:1671px;top:365px" width="14" height="14"><circle cx="6.6" cy="7" r="5.8" fill="#fff" stroke="#d9d9d9" stroke-width="1"/></svg>
<div class="t" style="left:1689.30px;top:366.00px;font-size:13.08px;color:#b3b3b3;transform:scaleX(0.8985);transform-origin:0 0;">Solid line</div>
<div class="a" style="left:1689px;top:379px;width:9px;height:1px;background:#b3b3b3;"></div>
<svg class="a" style="left:1671px;top:387px" width="14" height="14"><circle cx="6.6" cy="7" r="5.8" fill="#fff" stroke="#d9d9d9" stroke-width="1"/></svg>
<div class="t" style="left:1689.30px;top:388.00px;font-size:13.08px;color:#b3b3b3;transform:scaleX(0.8993);transform-origin:0 0;">Gradient line</div>
<div class="a" style="left:1689px;top:401px;width:9px;height:1px;background:#b3b3b3;"></div>
</body></html>
